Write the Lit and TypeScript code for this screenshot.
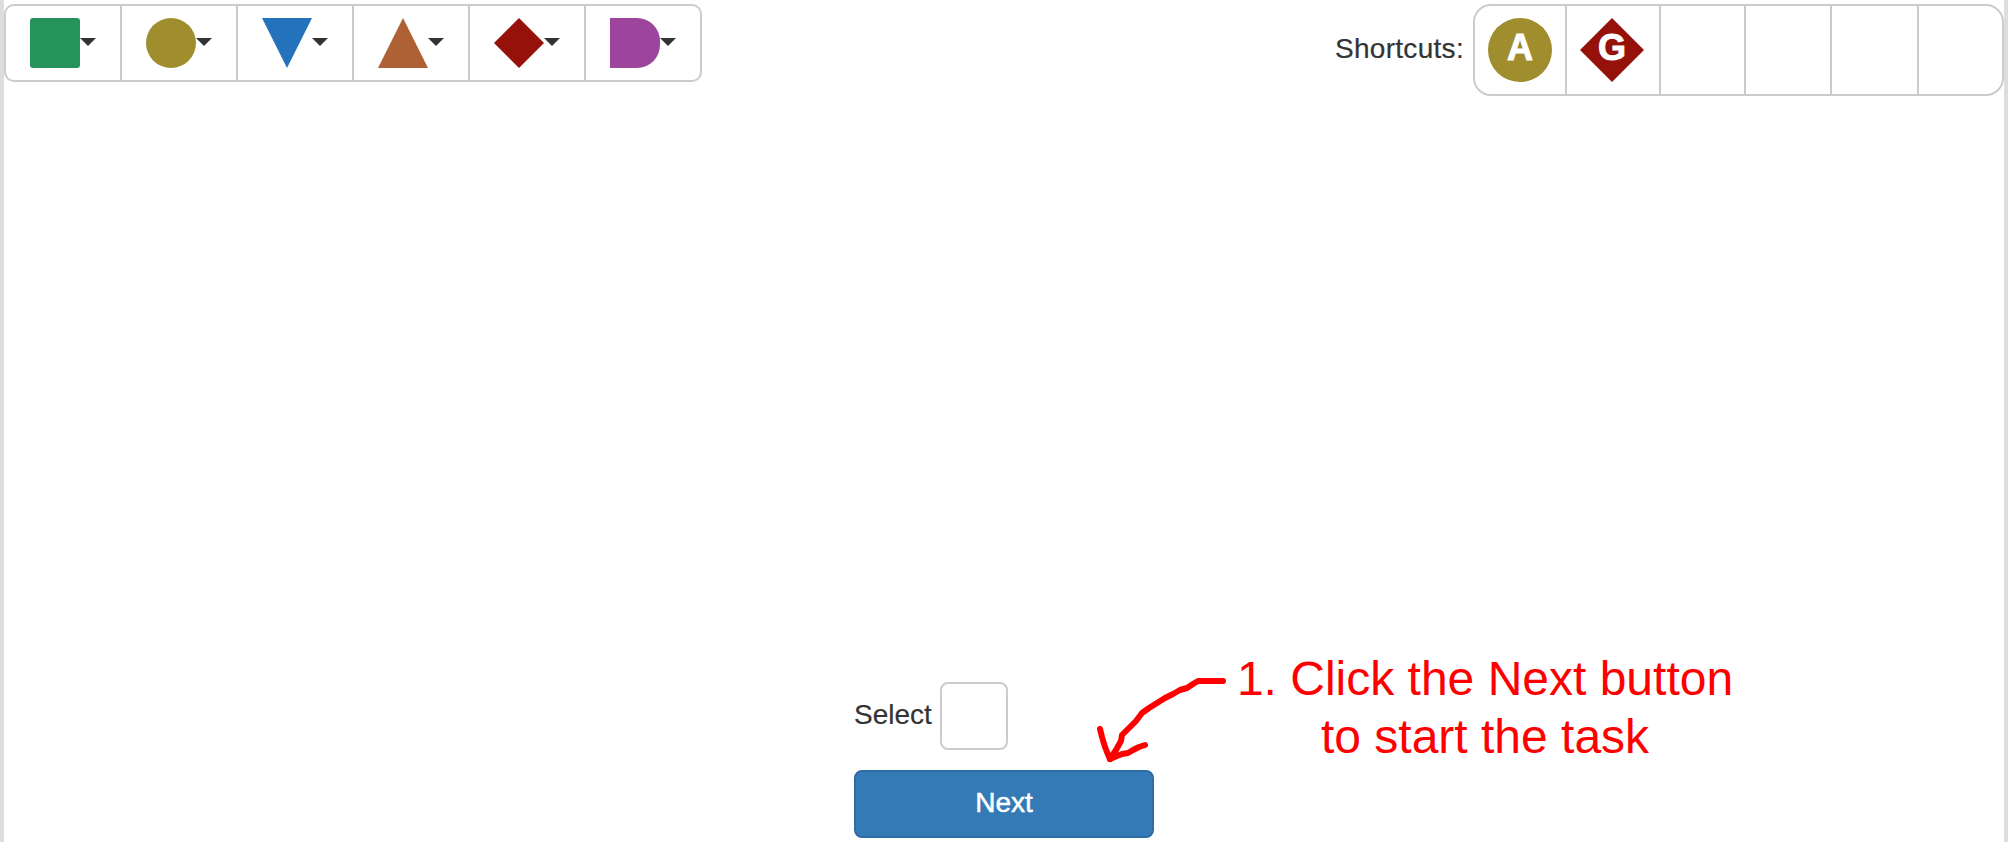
import { LitElement, html, css, svg } from "lit";
import { customElement } from "lit/decorators.js";

const SHAPES = {
  square: svg`<rect width="50" height="50" rx="3" fill="#26935a"/>`,
  circle: svg`<circle cx="25" cy="25" r="25" fill="#a08d2e"/>`,
  down: svg`<polygon points="0,0 50,0 25,50" fill="#2472bc"/>`,
  up: svg`<polygon points="25,0 50,50 0,50" fill="#ae6135"/>`,
  diamond: svg`<polygon points="25,0 50,25 25,50 0,25" fill="#951109"/>`,
  dee: svg`<path d="M0 0H27A23 23 0 0 1 50 23V27A23 23 0 0 1 27 50H0Z" fill="#9d449c"/>`,
};

const ORDER: (keyof typeof SHAPES)[] = ["square", "circle", "down", "up", "diamond", "dee"];

@customElement("app-root")
export class AppRoot extends LitElement {
  static styles = css`
    :host {
      display: block;
      font-family: "Liberation Sans", Arial, sans-serif;
      color: #333;
      font-size: 28px;
      -webkit-text-stroke: 0.2px currentColor;
    }
    * { box-sizing: border-box; }
    .page {
      position: relative;
      height: 842px;
      border-left: 4px solid #ddd;
      border-right: 4px solid #ddd;
      background: #fff;
      display: flex;
      flex-direction: column;
      padding: 4px 0 4px;
      overflow: hidden;
    }
    .top {
      display: flex;
      justify-content: space-between;
      align-items: flex-start;
    }
    .toolbar {
      display: flex;
      border: 2px solid #ccc;
      border-radius: 10px;
    }
    .tool {
      width: 116px;
      padding: 12px 0 12px 24px;
      border-right: 2px solid #ccc;
      display: flex;
      align-items: flex-start;
    }
    .tool:last-child { border-right: none; width: 114px; }
    .shape { width: 50px; height: 50px; display: block; flex: none; }
    .caret {
      flex: none;
      width: 16px;
      height: 8px;
      margin: 20px 0 0 0;
      display: block;
    }
    .shortcuts { display: flex; align-items: center; }
    .shortcuts-label {
      margin-right: 9px;
      line-height: 32px;
      padding-bottom: 2px;
      letter-spacing: 0.3px;
    }
    .slots {
      display: grid;
      grid-template-columns: 92px 94px 85px 86px 87px 83px;
      height: 92px;
      border: 2px solid #ccc;
      border-radius: 18px;
    }
    .slot {
      border-right: 2px solid #ccc;
      padding: 12px 0 12px 13px;
    }
    .slot:last-child { border-right: none; }
    .badge {
      position: relative;
      width: 64px;
      height: 64px;
      display: flex;
      align-items: center;
      justify-content: center;
      padding-bottom: 5px;
    }
    .badge svg { position: absolute; inset: 0; width: 64px; height: 64px; }
    .badge span {
      position: relative;
      color: #fff;
      font-size: 36px;
      font-weight: 700;
      line-height: 1;
      -webkit-text-stroke: 1px #fff;
    }
    .bottom {
      margin-top: auto;
      align-self: center;
      width: 300px;
      display: flex;
      flex-direction: column;
      gap: 20px;
    }
    .select { display: flex; align-items: center; gap: 8px; }
    .select-label { padding-bottom: 3px; }
    .select-box {
      width: 68px;
      height: 68px;
      border: 2px solid #ccc;
      border-radius: 8px;
    }
    .next {
      height: 68px;
      width: 300px;
      border: 2px solid #2e6da4;
      border-radius: 8px;
      background: #337ab7;
      color: #fff;
      font: inherit;
      padding: 0 0 2px;
      -webkit-text-stroke: 0.5px #fff;
    }
    .note {
      position: absolute;
      left: 1181px;
      top: 650px;
      width: 600px;
      text-align: center;
      color: #f00;
      font-size: 48px;
      line-height: 58px;
      -webkit-text-stroke: 0;
    }
    .arrow {
      position: absolute;
      left: -4px;
      top: 0;
      width: 2008px;
      height: 842px;
      pointer-events: none;
    }
  `;

  private shape(name: keyof typeof SHAPES) {
    return html`<svg class="shape" viewBox="0 0 50 50">${SHAPES[name]}</svg>`;
  }

  render() {
    return html`
      <div class="page">
        <div class="top">
          <div class="toolbar">
            ${ORDER.map(
              (s) => html`<div class="tool">
                ${this.shape(s)}
                <svg class="caret" viewBox="0 0 16 8"><polygon points="0,0 16,0 8,8" fill="#333"/></svg>
              </div>`
            )}
          </div>
          <div class="shortcuts">
            <span class="shortcuts-label">Shortcuts:</span>
            <div class="slots">
              <div class="slot">
                <div class="badge">
                  <svg viewBox="0 0 64 64"><circle cx="32" cy="32" r="32" fill="#a08d2e"/></svg>
                  <span>A</span>
                </div>
              </div>
              <div class="slot">
                <div class="badge">
                  <svg viewBox="0 0 64 64"><polygon points="32,0 64,32 32,64 0,32" fill="#951109"/></svg>
                  <span>G</span>
                </div>
              </div>
              <div class="slot"></div>
              <div class="slot"></div>
              <div class="slot"></div>
              <div class="slot"></div>
            </div>
          </div>
        </div>
        <div class="bottom">
          <div class="select">
            <span class="select-label">Select</span>
            <div class="select-box"></div>
          </div>
          <button class="next">Next</button>
        </div>
        <div class="note">1. Click the Next button<br />to start the task</div>
        <svg class="arrow" viewBox="0 0 2008 842" fill="none" stroke="#f00" stroke-width="6" stroke-linecap="round" stroke-linejoin="round">
          <path d="M1223 681L1198 681L1193 684L1187 688L1180 690L1173 694L1165 698L1157 703L1149 708L1142 713L1136 721L1129 728L1122 735L1121 741L1116 750L1110 759"/>
          <path d="M1100 729L1102 737L1105 747L1107 752L1110 759"/>
          <path d="M1145 745L1139 747L1133 750L1128 753L1122 754L1117 756L1110 759"/>
        </svg>
      </div>
    `;
  }
}
